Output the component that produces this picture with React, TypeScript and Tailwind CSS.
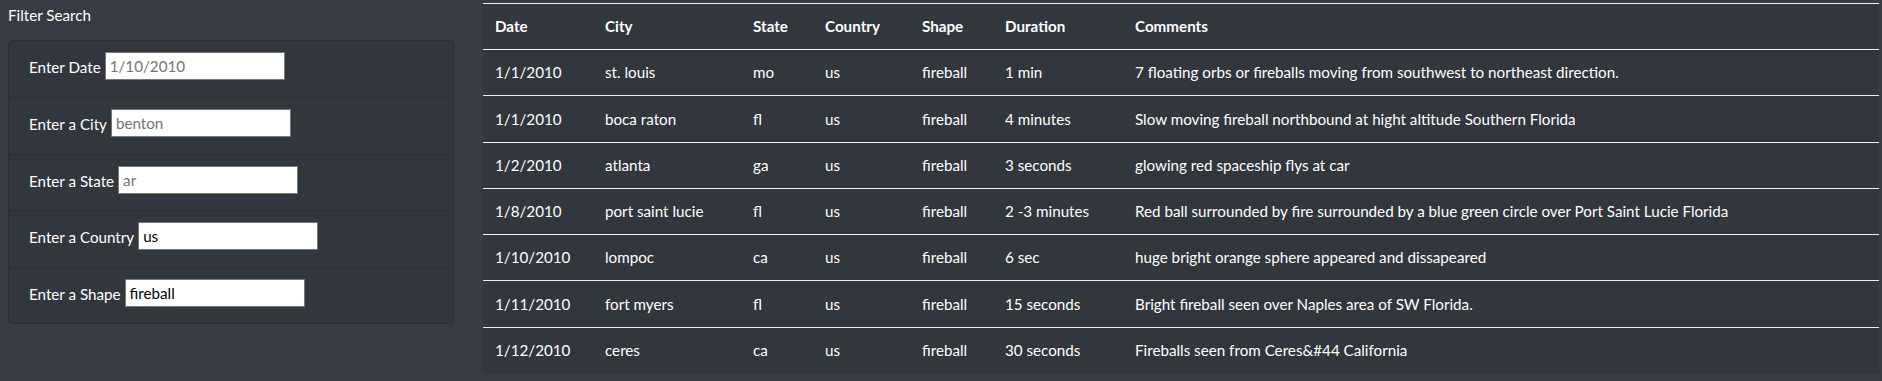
import React from "react";

type Sighting = {
  date: string;
  city: string;
  state: string;
  country: string;
  shape: string;
  duration: string;
  comments: string;
};

const sightings: Sighting[] = [
  { date: "1/1/2010", city: "st. louis", state: "mo", country: "us", shape: "fireball", duration: "1 min", comments: "7 floating orbs or fireballs moving from southwest to northeast direction." },
  { date: "1/1/2010", city: "boca raton", state: "fl", country: "us", shape: "fireball", duration: "4 minutes", comments: "Slow moving fireball northbound at hight altitude Southern Florida" },
  { date: "1/2/2010", city: "atlanta", state: "ga", country: "us", shape: "fireball", duration: "3 seconds", comments: "glowing red spaceship flys at car" },
  { date: "1/8/2010", city: "port saint lucie", state: "fl", country: "us", shape: "fireball", duration: "2 -3 minutes", comments: "Red ball surrounded by fire surrounded by a blue green circle over Port Saint Lucie Florida" },
  { date: "1/10/2010", city: "lompoc", state: "ca", country: "us", shape: "fireball", duration: "6 sec", comments: "huge bright orange sphere appeared and dissapeared" },
  { date: "1/11/2010", city: "fort myers", state: "fl", country: "us", shape: "fireball", duration: "15 seconds", comments: "Bright fireball seen over Naples area of SW Florida." },
  { date: "1/12/2010", city: "ceres", state: "ca", country: "us", shape: "fireball", duration: "30 seconds", comments: "Fireballs seen from Ceres&#44 California" },
];

const filters = [
  { label: "Enter Date", placeholder: "1/10/2010", value: "" },
  { label: "Enter a City", placeholder: "benton", value: "" },
  { label: "Enter a State", placeholder: "ar", value: "" },
  { label: "Enter a Country", placeholder: "", value: "us" },
  { label: "Enter a Shape", placeholder: "", value: "fireball" },
];

const columns = [
  { title: "Date", width: "w-[110px]" },
  { title: "City", width: "w-[148px]" },
  { title: "State", width: "w-[72px]" },
  { title: "Country", width: "w-[97px]" },
  { title: "Shape", width: "w-[83px]" },
  { title: "Duration", width: "w-[130px]" },
  { title: "Comments", width: "" },
];

function FilterPanel() {
  return (
    <aside className="w-[470px] shrink-0">
      <h5 className="pl-[8px] pt-[3px] text-[15.2px] leading-6 text-white">Filter Search</h5>
      <ul className="ml-[8px] mt-[13px] w-[446px] rounded-[4px] border border-[#2b2f35] bg-[#32363d]">
        {filters.map((filter, index) => (
          <li
            key={filter.label}
            className={`flex h-[56.4px] items-start pl-[20px] pt-[11px] ${index > 0 ? "border-t border-[#2b2f35]" : ""}`}
          >
            <label className="mt-[3px] text-[15.2px] leading-6 text-white">{filter.label}</label>
            <input
              className="ml-[4px] h-[28px] w-[180px] border border-[#767676] bg-white px-[4px] text-[15.2px] text-black outline-none placeholder:text-[#757575]"
              placeholder={filter.placeholder}
              defaultValue={filter.value}
            />
          </li>
        ))}
      </ul>
    </aside>
  );
}

function SightingsTable() {
  return (
    <div className="ml-[13px] mt-[3px] w-[1396px]">
      <table className="w-full table-fixed border-collapse bg-[#32363d] text-left text-[15.2px] text-white">
        <thead>
          <tr className="h-[46px] border-t border-b border-[#eceef0]">
            {columns.map((col) => (
              <th key={col.title} className={`${col.width} px-3 font-bold`}>
                {col.title}
              </th>
            ))}
          </tr>
        </thead>
        <tbody>
          {sightings.map((row, index) => (
            <tr key={index} className={`h-[46.3px] ${index > 0 ? "border-t border-[#eceef0]" : ""}`}>
              <td className="px-3">{row.date}</td>
              <td className="px-3">{row.city}</td>
              <td className="px-3">{row.state}</td>
              <td className="px-3">{row.country}</td>
              <td className="px-3">{row.shape}</td>
              <td className="px-3">{row.duration}</td>
              <td className="px-3">{row.comments}</td>
            </tr>
          ))}
        </tbody>
      </table>
    </div>
  );
}

export default function App() {
  return (
    <div
      className="flex h-[381px] w-full bg-[#373b43]"
      style={{ fontFamily: "Lato, 'Liberation Sans', sans-serif" }}
    >
      <FilterPanel />
      <SightingsTable />
    </div>
  );
}
